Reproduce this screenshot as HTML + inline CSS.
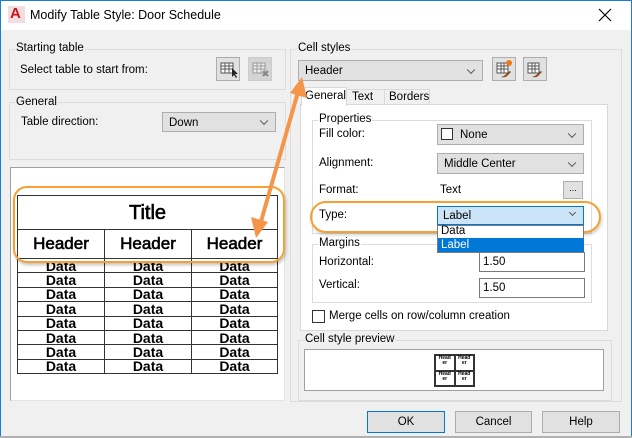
<!DOCTYPE html>
<html><head><meta charset="utf-8"><style>
*{box-sizing:border-box;margin:0;padding:0}
body{width:632px;height:438px;position:relative;background:#f0f0f0;font-family:"Liberation Sans",sans-serif;font-size:11.5px;color:#000;overflow:hidden}
.a{position:absolute}
.grp{position:absolute;border:1px solid #dcdcdc}
.lbl{position:absolute;background:#f0f0f0;padding:0 1px;white-space:nowrap}
.dd{position:absolute;background:#e1e1e1;border:1px solid #adadad;padding:4px 6px 0;white-space:nowrap}
.dd:after{content:"";position:absolute;right:8px;top:50%;width:5px;height:5px;border-right:1px solid #555;border-bottom:1px solid #555;transform:translateY(-70%) rotate(45deg)}
.btn{position:absolute;background:#e1e1e1;border:1px solid #adadad;text-align:center}
.inp{position:absolute;background:#fff;border:1px solid #7a7a7a;padding:3px 3px}
table{border-collapse:collapse;position:absolute;font-weight:bold;text-align:center}
td{border:1px solid #333;padding:0;line-height:12px;font-size:14px}
.h{font-size:17px;font-weight:normal;-webkit-text-stroke:0.6px #000}
</style></head><body>
<div class="a" style="left:0;top:0;width:632px;height:30px;background:#fff;border-top:1px solid #1a7fd4;border-left:1px solid #1a7fd4;border-right:1px solid #1a7fd4"></div>
<div class="a" style="left:0;top:0;width:1px;height:438px;background:#1a7fd4"></div>
<div class="a" style="right:0;top:0;width:1px;height:438px;background:#1a7fd4"></div>
<div class="a" style="left:8px;top:6px;width:17px;height:17px;background:#f2dede"></div>
<div class="a" style="left:10px;top:5px;font-size:15px;font-weight:bold;color:#c8161d">A</div>
<div class="a" style="left:30px;top:8px;font-size:12.5px">Modify Table Style: Door Schedule</div>
<svg class="a" style="left:598px;top:8px" width="14" height="14"><path d="M1 1L13 13M13 1L1 13" stroke="#000" stroke-width="1.2"/></svg>

<div class="grp" style="left:9px;top:49px;width:277px;height:41px"></div>
<div class="lbl" style="left:15px;top:42px">Starting table</div>
<div class="a" style="left:20px;top:64px">Select table to start from:</div>
<div class="btn" style="left:216px;top:57px;width:24px;height:24px"><svg width="22" height="22"><rect x="4" y="5" width="12" height="10" fill="#fff" stroke="#555"/><path d="M4 8h12M4 11h12M8 5v10M12 5v10" stroke="#555"/><path d="M15 10l0 9 2-2 2 3 1-1-2-3 3 0z" fill="#222"/></svg></div>
<div class="btn" style="left:248px;top:57px;width:24px;height:24px;background:#d4d4d4;border-color:#ccc"><svg width="22" height="22"><rect x="4" y="5" width="12" height="10" fill="#eee" stroke="#999"/><path d="M4 8h12M4 11h12M8 5v10M12 5v10" stroke="#999"/><path d="M14 13l5 5M19 13l-5 5" stroke="#888" stroke-width="2"/></svg></div>

<div class="grp" style="left:9px;top:102px;width:277px;height:58px"></div>
<div class="lbl" style="left:15px;top:96px">General</div>
<div class="a" style="left:21px;top:116px">Table direction:</div>
<div class="dd" style="left:162px;top:112px;width:114px;height:20px">Down</div>

<div class="a" style="left:10px;top:167px;width:275px;height:234px;background:#fff;border:1px solid #a0a0a0;border-right-color:#e3e3e3;border-bottom-color:#e3e3e3"></div>
<table style="left:17px;top:195px;width:261px">
<tr><td colspan="3" class="h" style="height:34px;font-size:20px">Title</td></tr>
<tr><td class="h" style="height:29px;width:87px">Header</td><td class="h" style="width:87px">Header</td><td class="h">Header</td></tr>
<tr><td style="height:14.4px">Data</td><td>Data</td><td>Data</td></tr>
<tr><td style="height:14.4px">Data</td><td>Data</td><td>Data</td></tr>
<tr><td style="height:14.4px">Data</td><td>Data</td><td>Data</td></tr>
<tr><td style="height:14.4px">Data</td><td>Data</td><td>Data</td></tr>
<tr><td style="height:14.4px">Data</td><td>Data</td><td>Data</td></tr>
<tr><td style="height:14.4px">Data</td><td>Data</td><td>Data</td></tr>
<tr><td style="height:14.4px">Data</td><td>Data</td><td>Data</td></tr>
<tr><td style="height:14.4px">Data</td><td>Data</td><td>Data</td></tr>
</table>
<div class="a" style="left:13px;top:186px;width:272px;height:77px;border:2px solid #f5a030;border-radius:14px;box-shadow:1px 2px 3px rgba(0,0,0,.25)"></div>

<div class="grp" style="left:290px;top:49px;width:332px;height:353px"></div>
<div class="lbl" style="left:297px;top:42px">Cell styles</div>
<div class="dd" style="left:298px;top:60px;width:185px;height:21px">Header</div>
<div class="btn" style="left:492px;top:57px;width:24px;height:24px"><svg width="22" height="22"><rect x="4" y="5" width="11" height="10" fill="#fff" stroke="#555"/><path d="M4 8h11M4 11h11M8 5v10M11 5v10" stroke="#555"/><circle cx="16" cy="5" r="3" fill="#f07a1a"/><path d="M8 19q4-1 6-4l3-2 1 1-3 3q-2 3-7 2z" fill="#8b4a1c"/></svg></div>
<div class="btn" style="left:523px;top:57px;width:24px;height:24px"><svg width="22" height="22"><rect x="4" y="5" width="11" height="10" fill="#fff" stroke="#555"/><path d="M4 8h11M4 11h11M8 5v10M11 5v10" stroke="#555"/><path d="M8 19q4-1 6-4l3-2 1 1-3 3q-2 3-7 2z" fill="#8b4a1c"/></svg></div>

<div class="a" style="left:300px;top:104px;width:308px;height:227px;background:#fff;border:1px solid #d9d9d9"></div>
<div class="a" style="left:301px;top:87px;width:46px;height:19px;background:#fff;border:1px solid #d9d9d9;border-bottom:none;padding:2px 0 0 3px">General</div>
<div class="a" style="left:346px;top:89px;width:39px;height:16px;background:#f0f0f0;border:1px solid #d9d9d9;padding:1px 0 0 5px">Text</div>
<div class="a" style="left:384px;top:89px;width:46px;height:16px;background:#f0f0f0;border:1px solid #d9d9d9;padding:1px 0 0 4px">Borders</div>

<div class="grp" style="left:312px;top:120px;width:280px;height:114px"></div>
<div class="lbl" style="left:318px;top:113px;background:#fff">Properties</div>
<div class="a" style="left:319px;top:128px">Fill color:</div>
<div class="dd" style="left:437px;top:124px;width:147px;height:21px;padding-left:22px">None</div>
<div class="a" style="left:441px;top:128px;width:12px;height:12px;background:#fff;border:1px solid #333"></div>
<div class="a" style="left:319px;top:157px">Alignment:</div>
<div class="dd" style="left:437px;top:153px;width:147px;height:21px">Middle Center</div>
<div class="a" style="left:319px;top:184px">Format:</div>
<div class="a" style="left:440px;top:184px">Text</div>
<div class="btn" style="left:563px;top:181px;width:20px;height:18px;font-size:9px;line-height:13px">...</div>
<div class="a" style="left:319px;top:209px">Type:</div>
<div class="a" style="left:437px;top:206px;width:147px;height:19px;background:#cce4f7;border:1px solid #0078d7;padding:3px 5px 0">Label</div>
<div class="a" style="left:570px;top:210px;width:5px;height:5px;border-right:1px solid #555;border-bottom:1px solid #555;transform:rotate(45deg)"></div>
<div class="a" style="left:310px;top:201px;width:291px;height:32px;border:2px solid #f5a030;border-radius:16px;box-shadow:1px 2px 3px rgba(0,0,0,.2)"></div>

<div class="grp" style="left:312px;top:244px;width:280px;height:59px"></div>
<div class="lbl" style="left:318px;top:237px;background:#fff">Margins</div>
<div class="a" style="left:319px;top:256px">Horizontal:</div>
<div class="inp" style="left:479px;top:252px;width:106px;height:20px">1.50</div>
<div class="a" style="left:319px;top:279px">Vertical:</div>
<div class="inp" style="left:479px;top:278px;width:106px;height:20px">1.50</div>
<div class="a" style="left:437px;top:225px;width:147px;height:28px;background:#fff;border:1px solid #7a7a7a"></div>
<div class="a" style="left:438px;top:225px;padding-left:3px;line-height:12px">Data</div>
<div class="a" style="left:438px;top:238px;width:146px;height:14px;background:#0078d7;color:#fff;padding-left:3px;line-height:14px">Label</div>
<div class="a" style="left:312px;top:310px;width:13px;height:13px;background:#fff;border:1px solid #333"></div>
<div class="a" style="left:329px;top:310px">Merge cells on row/column creation</div>

<div class="grp" style="left:298px;top:340px;width:314px;height:61px"></div>
<div class="lbl" style="left:304px;top:333px">Cell style preview</div>
<div class="a" style="left:304px;top:349px;width:300px;height:42px;background:#fff;border:1px solid #a0a0a0"></div>
<div class="a" style="left:434px;top:354px;width:41px;height:33px;border:1px solid #333;font-size:5px;font-weight:bold;line-height:5px;display:grid;grid-template-columns:1fr 1fr">
<div style="border:1px solid #333;text-align:center">Head<br>er</div><div style="border:1px solid #333;text-align:center">Head<br>er</div><div style="border:1px solid #333;text-align:center">Head<br>er</div><div style="border:1px solid #333;text-align:center">Head<br>er</div></div>

<div class="btn" style="left:367px;top:411px;width:78px;height:22px;border:1px solid #0078d7;line-height:20px">OK</div>
<div class="btn" style="left:455px;top:411px;width:77px;height:22px;line-height:20px">Cancel</div>
<div class="btn" style="left:542px;top:411px;width:78px;height:22px;line-height:20px">Help</div>
<div class="a" style="left:0;top:436px;width:632px;height:2px;background:#b0b0b0"></div>

<svg class="a" style="left:0;top:0" width="632" height="438">
<line x1="298" y1="92" x2="260" y2="225" stroke="#f5954a" stroke-width="4"/>
<polygon points="302,77 307,98 290,93" fill="#f5954a"/>
<polygon points="256,238 251,217 268,222" fill="#f5954a"/>
</svg>
</body></html>
